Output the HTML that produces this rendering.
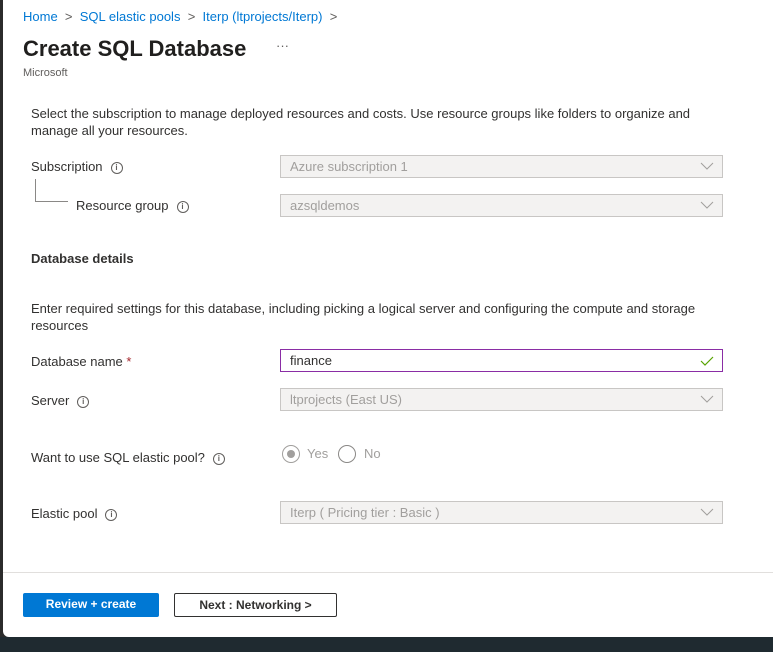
<!DOCTYPE html>
<html><head><style>
body{margin:0;width:773px;height:652px;background:#2b2b2b;position:relative;overflow:hidden;font-family:"Segoe UI","Liberation Sans",sans-serif;font-size:13px;color:#323130}
.panel{position:absolute;left:3px;top:0;width:770px;height:637px;background:#fff;border-bottom-left-radius:6px}
.a{position:absolute;white-space:nowrap}
.link{color:#0078d4;font-size:13px}
.sep{color:#605e5c}
.f{position:absolute;left:277px;width:441px;height:21px;border:1px solid #c8c6c4;background:#f3f2f1;color:#a19f9d;box-sizing:content-box;line-height:21px;padding-left:0}
.f span{margin-left:9px}
.chev{position:absolute;right:8px;top:5px}
.i{display:inline-block;width:10px;height:10px;border:1px solid #605e5c;border-radius:50%;font-size:8px;line-height:10px;text-align:center;margin-left:8px;vertical-align:1px;color:#605e5c;font-weight:bold}
</style></head><body>
<div class="panel">
<div class="a" style="left:20px;top:9px"><span class="link">Home</span> <span class="sep">&nbsp;&gt;&nbsp;</span> <span class="link">SQL elastic pools</span> <span class="sep">&nbsp;&gt;&nbsp;</span> <span class="link">Iterp (ltprojects/Iterp)</span> <span class="sep">&nbsp;&gt;</span></div>
<div class="a" style="left:20px;top:36px;font-size:22px;font-weight:600;color:#201f1e">Create SQL Database</div>
<div class="a" style="left:273px;top:38px;color:#605e5c">···</div>
<div class="a" style="left:20px;top:67px;font-size:11px;color:#605e5c">Microsoft</div>
<div class="a" style="left:28px;top:105px;line-height:17px;white-space:normal;width:690px">Select the subscription to manage deployed resources and costs. Use resource groups like folders to organize and manage all your resources.</div>
<div class="a" style="left:28px;top:159px">Subscription<span class="i">i</span></div>
<div class="a" style="left:32px;top:179px;width:32px;height:22px;border-left:1px solid #8a8886;border-bottom:1px solid #8a8886"></div>
<div class="a" style="left:73px;top:198px">Resource group<span class="i">i</span></div>
<div class="f" style="top:155px"><span>Azure subscription 1</span><svg class="chev" width="14" height="10"><path d="M1 2l6 6 6-6" fill="none" stroke="#a19f9d"/></svg></div>
<div class="f" style="top:194px"><span>azsqldemos</span><svg class="chev" width="14" height="10"><path d="M1 2l6 6 6-6" fill="none" stroke="#a19f9d"/></svg></div>
<div class="a" style="left:28px;top:251px;font-weight:600">Database details</div>
<div class="a" style="left:28px;top:300px;line-height:17px;white-space:normal;width:690px">Enter required settings for this database, including picking a logical server and configuring the compute and storage resources</div>
<div class="a" style="left:28px;top:354px">Database name <span style="color:#a4262c">*</span></div>
<div class="f" style="top:349px;background:#fff;border-color:#8a2da5;color:#323130"><span>finance</span><svg class="chev" width="14" height="12" style="top:5px"><path d="M1 6l4 4 8-8" fill="none" stroke="#57a300" stroke-width="1.2"/></svg></div>
<div class="a" style="left:28px;top:393px">Server<span class="i">i</span></div>
<div class="f" style="top:388px"><span>ltprojects (East US)</span><svg class="chev" width="14" height="10"><path d="M1 2l6 6 6-6" fill="none" stroke="#a19f9d"/></svg></div>
<div class="a" style="left:28px;top:450px">Want to use SQL elastic pool?<span class="i">i</span></div>
<div class="a" style="left:279px;top:445px;width:16px;height:16px;border:1px solid #a19f9d;border-radius:50%"><div style="position:absolute;left:4px;top:4px;width:8px;height:8px;border-radius:50%;background:#a19f9d"></div></div>
<div class="a" style="left:304px;top:446px;color:#a19f9d">Yes</div>
<div class="a" style="left:335px;top:445px;width:16px;height:16px;border:1px solid #8a8886;border-radius:50%"></div>
<div class="a" style="left:361px;top:446px;color:#a19f9d">No</div>
<div class="a" style="left:28px;top:506px">Elastic pool<span class="i">i</span></div>
<div class="f" style="top:501px"><span>Iterp ( Pricing tier : Basic )</span><svg class="chev" width="14" height="10"><path d="M1 2l6 6 6-6" fill="none" stroke="#a19f9d"/></svg></div>
<div class="a" style="left:0;top:572px;width:770px;height:1px;background:#e1dfdd"></div>
<div class="a" style="left:20px;top:593px;width:136px;height:24px;background:#0078d4;border-radius:2px;color:#fff;font-weight:600;text-align:center;line-height:23px;font-size:12px">Review + create</div>
<div class="a" style="left:171px;top:593px;width:161px;height:22px;border:1px solid #323130;border-radius:2px;font-weight:600;text-align:center;line-height:22px;font-size:12px">Next : Networking &gt;</div>
</div>
<div class="a" style="left:0;top:637px;width:773px;height:15px;background:#1f2a30"></div>
</body></html>
